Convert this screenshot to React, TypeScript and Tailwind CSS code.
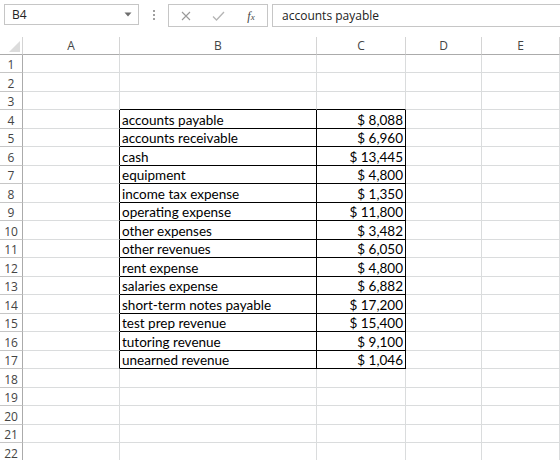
import React from "react";

const rows: [string, string][] = [
  ["accounts payable", "8,088"],
  ["accounts receivable", "6,960"],
  ["cash", "13,445"],
  ["equipment", "4,800"],
  ["income tax expense", "1,350"],
  ["operating expense", "11,800"],
  ["other expenses", "3,482"],
  ["other revenues", "6,050"],
  ["rent expense", "4,800"],
  ["salaries expense", "6,882"],
  ["short-term notes payable", "17,200"],
  ["test prep revenue", "15,400"],
  ["tutoring revenue", "9,100"],
  ["unearned revenue", "1,046"],
];

const cols = ["A", "B", "C", "D", "E"];

const uiFont = { fontFamily: '"Open Sans", "Noto Sans", sans-serif' };
const cellFont = { fontFamily: 'Lato, "Liberation Sans", sans-serif' };

function RowCells({ n }: { n: number }) {
  const item = n >= 4 && n <= 17 ? rows[n - 4] : null;
  const h = n % 2 === 1 ? "h-[18px]" : "h-[19px]";
  const grid = "border-r border-b border-[#dadcdd]";
  const black = "border-r border-b border-black";
  return (
    <>
      <div
        className={`${h} border-r border-b border-[#c6c6c6] border-r-[#ababab] flex items-end justify-center text-[12px] leading-[15px] text-[#444]`}
        style={uiFont}
      >
        {n}
      </div>
      <div className={`${h} ${item ? "border-b border-[#dadcdd] border-r border-r-black" : grid}`} />
      <div
        className={`${h} ${item ? black : n === 3 ? "border-r border-[#dadcdd] border-b border-b-black" : grid} flex items-end px-[2px] text-[13.5px] leading-[15px] text-black`}
        style={cellFont}
      >
        {item ? item[0] : ""}
      </div>
      <div
        className={`${h} ${item ? black : n === 3 ? "border-r border-[#dadcdd] border-b border-b-black" : grid} flex items-end justify-end px-[2px] text-[13.5px] leading-[15px] text-black`}
        style={cellFont}
      >
        {item ? `$ ${item[1]}` : ""}
      </div>
      <div className={`${h} ${grid}`} />
      <div className={`${h} ${grid}`} />
    </>
  );
}

export default function App() {
  return (
    <div className="w-[560px] h-[460px] bg-white overflow-hidden relative">
      {/* formula bar */}
      <div className="flex items-start h-[37px] pt-[4px] pl-[4px]">
        <div
          className="w-[135px] h-[21px] border border-[#c6c6c6] flex items-center justify-between pl-[7px] pr-[6px] text-[12px] text-[#222]"
          style={uiFont}
        >
          <span>B4</span>
          <svg width="8" height="5" viewBox="0 0 8 5">
            <path d="M0.5 0.5 L7.5 0.5 L4 4.5 Z" fill="#6d6d6d" />
          </svg>
        </div>
        <div className="w-[29px] h-[21px] flex flex-col items-center justify-center gap-[2px]">
          <span className="w-[2px] h-[2px] bg-[#a0a0a0]" />
          <span className="w-[2px] h-[2px] bg-[#a0a0a0]" />
          <span className="w-[2px] h-[2px] bg-[#a0a0a0]" />
        </div>
        <div className="w-[100px] h-[23px] border border-[#c6c6c6] flex items-center">
          <div className="w-[33px] flex justify-center">
            <svg width="10" height="10" viewBox="0 0 10 10">
              <path d="M1 1 L9 9 M9 1 L1 9" stroke="#9a9a9a" strokeWidth="1.1" />
            </svg>
          </div>
          <div className="w-[33px] flex justify-center">
            <svg width="13" height="10" viewBox="0 0 13 10">
              <path d="M1 5.5 L4.5 9 L12 1" stroke="#b5b5b5" strokeWidth="1.3" fill="none" />
            </svg>
          </div>
          <div
            className="w-[32px] flex justify-center text-[12px] italic text-[#444]"
            style={{ fontFamily: '"Liberation Serif", serif' }}
          >
            <span>
              f<span className="text-[9px]">x</span>
            </span>
          </div>
        </div>
        <div
          className="ml-[4px] flex-1 h-[23px] border-t border-b border-l border-[#c6c6c6] flex items-center pl-[9px] text-[12px] text-[#222]"
          style={uiFont}
        >
          accounts payable
        </div>
      </div>

      {/* grid */}
      <div className="grid grid-cols-[23px_97px_197px_89px_76px_78px]">
        <div className="h-[18px] border-r border-b border-[#ababab] border-r-[#d4d4d4] flex items-end justify-end p-[2px]">
          <svg width="11" height="11" viewBox="0 0 11 11">
            <path d="M11 0 L11 11 L0 11 Z" fill="#dcdcdc" />
          </svg>
        </div>
        {cols.map((c) => (
          <div
            key={c}
            className="h-[18px] border-r border-b border-[#ababab] border-r-[#d4d4d4] flex items-end justify-center pb-[1px] text-[12px] leading-[15px] text-[#444]"
            style={uiFont}
          >
            {c}
          </div>
        ))}
        {Array.from({ length: 22 }, (_, i) => (
          <RowCells key={i} n={i + 1} />
        ))}
      </div>
    </div>
  );
}
